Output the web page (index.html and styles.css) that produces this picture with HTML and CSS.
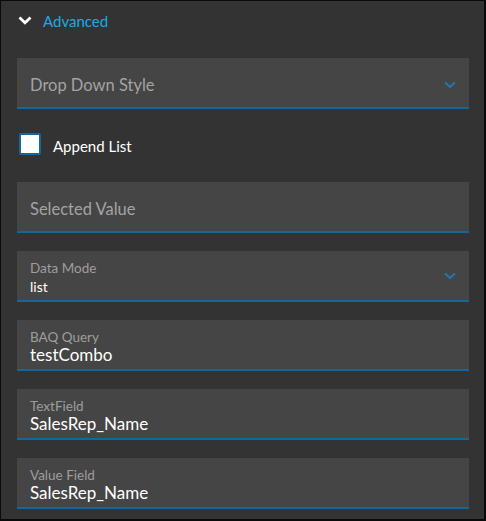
FILE: index.html
```html
<!DOCTYPE html>
<html>
<head>
<meta charset="utf-8">
<link rel="stylesheet" href="styles.css">
</head>
<body>
<div class="panel">
  <div class="header">
    <svg class="hchev" width="14" height="9" viewBox="0 0 14 9"><path d="M1.5 1.5 L7 6.8 L12.5 1.5" fill="none" stroke="#fff" stroke-width="2.8"/></svg>
    <span class="htitle">Advanced</span>
  </div>
  <div class="form">
    <div class="field select plain">
      <span class="placeholder">Drop Down Style</span>
      <svg class="chev" width="12" height="8" viewBox="0 0 12 8"><path d="M1 1.5 L6 6 L11 1.5" fill="none" stroke="#1f78b4" stroke-width="2"/></svg>
    </div>
    <label class="check">
      <span class="box"></span>
      <span class="check-label">Append List</span>
    </label>
    <div class="field plain">
      <span class="placeholder">Selected Value</span>
    </div>
    <div class="field select labeled">
      <div class="stack">
        <span class="label">Data Mode</span>
        <span class="value small">list</span>
      </div>
      <svg class="chev" width="12" height="8" viewBox="0 0 12 8"><path d="M1 1.5 L6 6 L11 1.5" fill="none" stroke="#1f78b4" stroke-width="2"/></svg>
    </div>
    <div class="field labeled">
      <div class="stack">
        <span class="label">BAQ Query</span>
        <span class="value">testCombo</span>
      </div>
    </div>
    <div class="field labeled">
      <div class="stack">
        <span class="label">TextField</span>
        <span class="value">SalesRep_Name</span>
      </div>
    </div>
    <div class="field labeled">
      <div class="stack">
        <span class="label">Value Field</span>
        <span class="value">SalesRep_Name</span>
      </div>
    </div>
  </div>
</div>
</body>
</html>
```

FILE: styles.css
```css
html, body {
  margin: 0;
  padding: 0;
  background: #000;
}
body {
  font-family: "Lato", "Open Sans", sans-serif;
}
.panel {
  width: 486px;
  height: 521px;
  box-sizing: border-box;
  background: #333333;
  border: 1px solid #0a0a0a;
  border-right-width: 2px;
  border-bottom-width: 2px;
  padding: 0 15px 0 16px;
}
.header {
  height: 40px;
  display: flex;
  align-items: center;
  padding-left: 1px;
}
.hchev {
  display: block;
  margin-right: 11px;
  margin-top: -1px;
}
.htitle {
  color: #1fa9e3;
  font-size: 15px;
}
.form {
  display: flex;
  flex-direction: column;
  margin-top: 17px;
}
.field {
  height: 51px;
  box-sizing: border-box;
  background: #454545;
  border-bottom: 2px solid #10689e;
  display: flex;
  align-items: center;
  padding: 0 13px;
  margin-bottom: 18px;
}
.field.plain {
  padding-top: 5px;
}
.placeholder {
  color: #a3a3a3;
  font-size: 16.5px;
  flex: 1;
}
.chev {
  display: block;
}
.select .chev {
  margin-left: auto;
}
.stack {
  display: flex;
  flex-direction: column;
  flex: 1;
  padding-top: 4px;
}
.label {
  color: #9e9e9e;
  font-size: 13.5px;
  line-height: 16px;
}
.value {
  color: #fff;
  font-size: 17px;
  line-height: 20px;
}
.value.small {
  font-size: 14px;
  line-height: 19px;
  padding-top: 1px;
}
.check {
  display: flex;
  align-items: center;
  margin: 6px 0 27px 2px;
}
.box {
  width: 22px;
  height: 22px;
  box-sizing: border-box;
  background: #fff;
  border: 2px solid #16669a;
  border-radius: 2px;
  margin-right: 12px;
}
.check-label {
  color: #fff;
  font-size: 15px;
  padding-top: 3px;
}
```
